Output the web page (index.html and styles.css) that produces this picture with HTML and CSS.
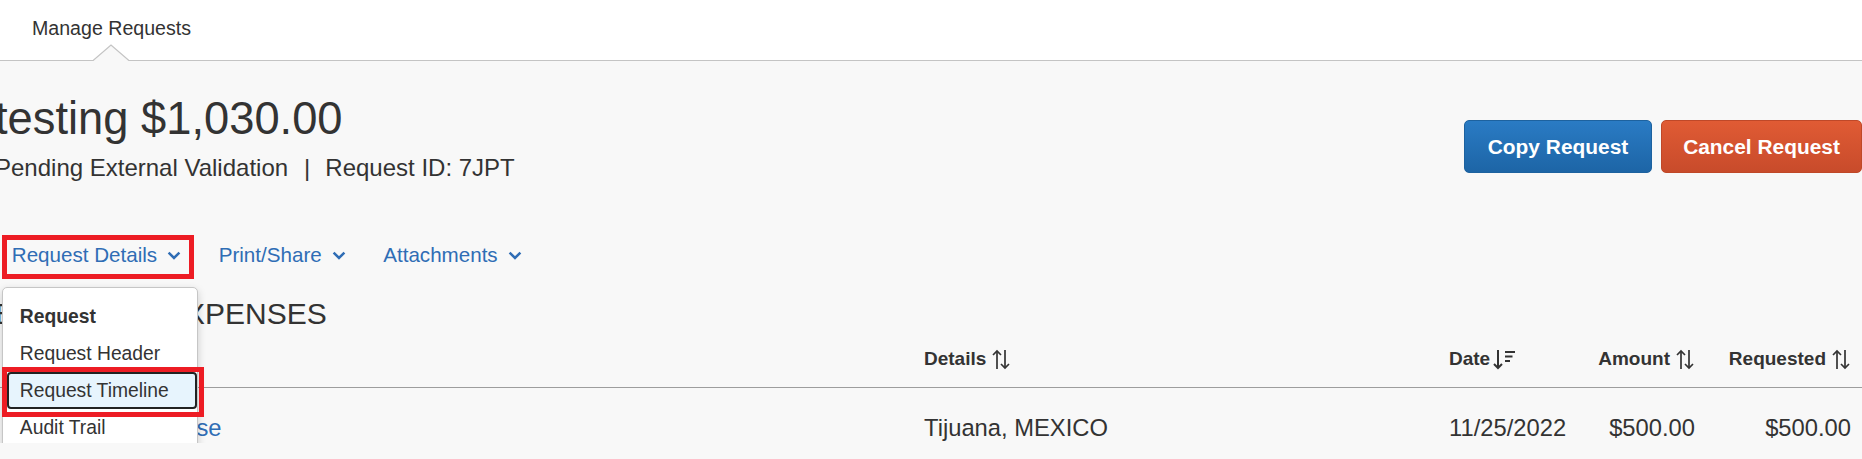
FILE: index.html
```html
<!DOCTYPE html>
<html lang="en">
<head>
<meta charset="utf-8">
<title>Manage Requests</title>
<link rel="stylesheet" href="styles.css">
</head>
<body>
<header class="topbar">
  <span class="topbar-title">Manage Requests</span>
  <svg class="topbar-caret" width="36" height="17" viewBox="0 0 36 17" aria-hidden="true">
    <polygon points="0,17 18,1 36,17" fill="#f8f8f8"/>
    <polyline points="0,16.5 18,1 36,16.5" fill="none" stroke="#c4c4c4" stroke-width="1.3"/>
  </svg>
</header>
<main class="page">
  <section class="summary">
    <div class="summary-text">
      <h1 class="req-title">testing $1,030.00</h1>
      <p class="req-meta">Pending External Validation<span class="sep">|</span>Request ID: 7JPT</p>
    </div>
    <div class="actions">
      <button class="btn btn-copy">Copy Request</button>
      <button class="btn btn-cancel">Cancel Request</button>
    </div>
  </section>

  <nav class="tabs">
    <div class="tab tab-open">
      <span>Request Details</span>
      <svg class="chev" width="14" height="9" viewBox="0 0 14 9" aria-hidden="true"><polyline points="1.6,1.6 7,6.9 12.4,1.6" fill="none" stroke="currentColor" stroke-width="2.5"/></svg>
      <div class="mark mark-tab"></div>
      <div class="menu">
        <div class="menu-item menu-group">Request</div>
        <div class="menu-item">Request Header</div>
        <div class="menu-item focused">Request Timeline<div class="mark mark-focus"></div></div>
        <div class="menu-item">Audit Trail</div>
      </div>
    </div>
    <div class="tab">
      <span>Print/Share</span>
      <svg class="chev" width="14" height="9" viewBox="0 0 14 9" aria-hidden="true"><polyline points="1.6,1.6 7,6.9 12.4,1.6" fill="none" stroke="currentColor" stroke-width="2.5"/></svg>
    </div>
    <div class="tab">
      <span>Attachments</span>
      <svg class="chev" width="14" height="9" viewBox="0 0 14 9" aria-hidden="true"><polyline points="1.6,1.6 7,6.9 12.4,1.6" fill="none" stroke="currentColor" stroke-width="2.5"/></svg>
    </div>
  </nav>

  <h2 class="section-title">EXPECTED EXPENSES</h2>

  <div class="grid">
    <div class="row head">
      <div class="cell"></div>
      <div class="cell"><span>Details</span>
        <svg class="sort" width="20" height="21" viewBox="0 0 20 21" aria-hidden="true"><g fill="none" stroke="#333" stroke-width="1.7"><line x1="6" y1="20" x2="6" y2="2"/><polyline points="2,6 6,2 10,6"/><line x1="14" y1="1" x2="14" y2="19"/><polyline points="10,15 14,19 18,15"/></g></svg>
      </div>
      <div class="cell"><span>Date</span>
        <svg class="sort sort-date" width="24" height="21" viewBox="0 0 24 21" aria-hidden="true"><g fill="none" stroke="#333" stroke-width="2"><line x1="6" y1="1" x2="6" y2="19"/><polyline points="2,15 6,19 10,15"/><line x1="13" y1="3" x2="23" y2="3"/><line x1="13" y1="7.5" x2="20.5" y2="7.5"/><line x1="13" y1="12" x2="18" y2="12"/></g></svg>
      </div>
      <div class="cell right"><span>Amount</span>
        <svg class="sort" width="20" height="21" viewBox="0 0 20 21" aria-hidden="true"><g fill="none" stroke="#333" stroke-width="1.7"><line x1="6" y1="20" x2="6" y2="2"/><polyline points="2,6 6,2 10,6"/><line x1="14" y1="1" x2="14" y2="19"/><polyline points="10,15 14,19 18,15"/></g></svg>
      </div>
      <div class="cell right"><span>Requested</span>
        <svg class="sort" width="20" height="21" viewBox="0 0 20 21" aria-hidden="true"><g fill="none" stroke="#333" stroke-width="1.7"><line x1="6" y1="20" x2="6" y2="2"/><polyline points="2,6 6,2 10,6"/><line x1="14" y1="1" x2="14" y2="19"/><polyline points="10,15 14,19 18,15"/></g></svg>
      </div>
    </div>
    <div class="row body">
      <div class="cell first"><a class="link" href="#">Lodging Expense</a></div>
      <div class="cell">Tijuana, MEXICO</div>
      <div class="cell">11/25/2022</div>
      <div class="cell right">$500.00</div>
      <div class="cell right">$500.00</div>
    </div>
  </div>
</main>
</body>
</html>
```

FILE: styles.css
```css
html, body {
  margin: 0;
  padding: 0;
  overflow: hidden;
  background: #f8f8f8;
}

body {
  font-family: "Liberation Sans", Arial, sans-serif;
  color: #333;
}

.topbar {
  position: relative;
  box-sizing: border-box;
  height: 61px;
  background: #fff;
  border-bottom: 1px solid #c4c4c4;
  padding: 19px 0 0 32px;
}

.topbar-title {
  display: block;
  font-size: 19.6px;
  line-height: 19px;
  color: #333;
}

.topbar-caret {
  position: absolute;
  left: 93px;
  bottom: -1px;
  display: block;
}

.page {
  margin-left: -5px;
  padding-top: 31.5px;
}

.summary {
  display: flex;
  justify-content: space-between;
  align-items: flex-start;
}

.req-title {
  margin: 0;
  font-size: 45.3px;
  line-height: 52px;
  font-weight: normal;
  color: #333;
}

.req-meta {
  margin: 8.25px 0 0;
  font-size: 24px;
  line-height: 30px;
  color: #333;
}

.sep {
  margin: 0 15px 0 16px;
}

.actions {
  display: flex;
  gap: 9px;
  margin-top: 27.5px;
}

.btn {
  box-sizing: border-box;
  height: 53px;
  padding: 0;
  border-radius: 5px;
  color: #fff;
  font-family: "Liberation Sans", Arial, sans-serif;
  font-weight: bold;
  font-size: 20.9px;
  line-height: 51px;
  text-align: center;
}

.btn-copy {
  width: 188px;
  border: 1px solid #1d629f;
  background: linear-gradient(#2a7bc4, #1d65a6);
}

.btn-cancel {
  width: 201px;
  border: 1px solid #bf4828;
  background: linear-gradient(#e05b34, #c84b2b);
}

.tabs {
  display: flex;
  gap: 37.5px;
  margin: 60.25px 0 0 16.8px;
  font-size: 20.6px;
  line-height: 24px;
}

.tab {
  position: relative;
  display: flex;
  align-items: center;
  gap: 10px;
  color: #2f6db5;
}

.chev {
  display: block;
}

.mark {
  position: absolute;
  box-sizing: border-box;
  border: 5px solid #ed1c24;
  pointer-events: none;
}

.mark-tab {
  left: -10px;
  top: -8px;
  width: 192px;
  height: 44px;
}

.menu {
  position: absolute;
  top: 43.7px;
  left: -10px;
  z-index: 5;
  box-sizing: border-box;
  width: 196px;
  padding: 10px 0 6.5px;
  background: #fff;
  border: 1px solid #c6c6c6;
  border-radius: 5px;
  box-shadow: 0 3px 8px rgba(0, 0, 0, 0.18);
  color: #333;
  font-size: 19.3px;
}

.menu-item {
  height: 37px;
  line-height: 37px;
  padding-left: 17px;
  white-space: nowrap;
}

.menu-group {
  font-weight: bold;
}

.menu-item.focused {
  position: relative;
  box-sizing: border-box;
  margin-left: 4px;
  padding-left: 11px;
  line-height: 33px;
  border: 2px solid #222;
  border-radius: 4px;
  background: #e7f4fd;
}

.mark-focus {
  left: -7px;
  top: -7px;
  width: 202px;
  height: 50px;
}

.section-title {
  margin: 28.6px 0 0;
  font-size: 30px;
  line-height: 36px;
  font-weight: normal;
  color: #333;
}

.row {
  display: grid;
  grid-template-columns: 929px 525px 131px 115px 156px;
  padding-right: 11px;
}

.row.head {
  padding-top: 15.8px;
  padding-bottom: 15.6px;
  border-bottom: 1px solid #9d9d9d;
  font-size: 19px;
  line-height: 24px;
  font-weight: bold;
}

.head .cell {
  display: flex;
  align-items: center;
  gap: 5px;
}

.head .cell.right {
  justify-content: flex-end;
}

.sort {
  display: block;
}

.sort-date {
  margin-left: -3px;
}

.row.body {
  padding-top: 24.75px;
  font-size: 23.75px;
  line-height: 30px;
}

.body .cell.right {
  text-align: right;
}

.body .cell.first {
  padding-left: 43px;
}

.link {
  color: #2f6db5;
  text-decoration: none;
}
```
